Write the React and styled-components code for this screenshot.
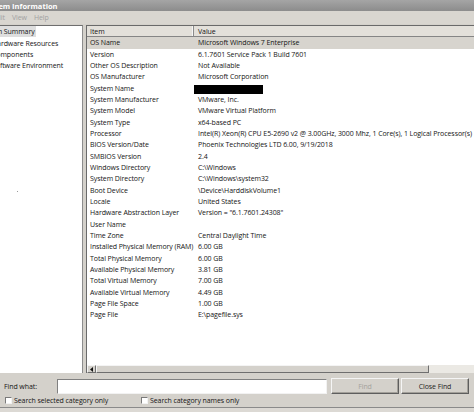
import React from "react";
import styled, { createGlobalStyle } from "styled-components";

const GlobalStyle = createGlobalStyle`
  html, body {
    margin: 0;
    padding: 0;
    background: #d4d1cb;
  }
  body {
    font-family: "Open Sans", "Noto Sans", "Liberation Sans", sans-serif;
  }
`;

const rows = [
  ["OS Name", "Microsoft Windows 7 Enterprise"],
  ["Version", "6.1.7601 Service Pack 1 Build 7601"],
  ["Other OS Description", "Not Available"],
  ["OS Manufacturer", "Microsoft Corporation"],
  ["System Name", null],
  ["System Manufacturer", "VMware, Inc."],
  ["System Model", "VMware Virtual Platform"],
  ["System Type", "x64-based PC"],
  ["Processor", "Intel(R) Xeon(R) CPU E5-2690 v2 @ 3.00GHz, 3000 Mhz, 1 Core(s), 1 Logical Processor(s)"],
  ["BIOS Version/Date", "Phoenix Technologies LTD 6.00, 9/19/2018"],
  ["SMBIOS Version", "2.4"],
  ["Windows Directory", "C:\\Windows"],
  ["System Directory", "C:\\Windows\\system32"],
  ["Boot Device", "\\Device\\HarddiskVolume1"],
  ["Locale", "United States"],
  ["Hardware Abstraction Layer", 'Version = "6.1.7601.24308"'],
  ["User Name", ""],
  ["Time Zone", "Central Daylight Time"],
  ["Installed Physical Memory (RAM)", "6.00 GB"],
  ["Total Physical Memory", "6.00 GB"],
  ["Available Physical Memory", "3.81 GB"],
  ["Total Virtual Memory", "7.00 GB"],
  ["Available Virtual Memory", "4.49 GB"],
  ["Page File Space", "1.00 GB"],
  ["Page File", "E:\\pagefile.sys"],
];

const treeItems = [
  { label: "System Summary", level: 0, selected: true },
  { label: "Hardware Resources", level: 1 },
  { label: "Components", level: 1 },
  { label: "Software Environment", level: 1 },
];

const Viewport = styled.div`
  width: 474px;
  height: 412px;
  overflow: hidden;
`;

// the window is wider than the shot: its left edge is cut off
const Window = styled.div`
  margin-left: -30px;
  width: 504px;
  height: 412px;
  display: flex;
  flex-direction: column;
  font-size: 7px;
  letter-spacing: -0.08px;
  color: #141414;
  background: #d4d1cb;
`;

const TitleBar = styled.div`
  flex: none;
  height: 11px;
  display: flex;
  align-items: center;
  padding-left: 13px;
  background: linear-gradient(#a5a5a5, #8c8c8c);
  color: #fff;
  font-weight: 700;
  font-size: 7.5px;
  letter-spacing: 0;
`;

const MenuBar = styled.div`
  flex: none;
  height: 13px;
  display: flex;
  align-items: center;
  gap: 7px;
  padding-left: 5px;
  background: #d9d6d0;
  color: #a2a2a2;
`;

const Main = styled.div`
  flex: 1;
  min-height: 0;
  display: flex;
  gap: 3px;
  padding-top: 1px;
`;

const TreePanel = styled.div`
  flex: none;
  width: 113px;
  box-sizing: border-box;
  background: #fff;
  border: 1px solid #8d8d8d;
  border-top-color: #6e6e6e;
  border-bottom: none;
  padding-top: 0.33px;
  position: relative;
`;

const TreeRow = styled.div`
  height: 11.33px;
  display: flex;
  align-items: center;
  padding-left: ${(p) => (p.$level ? 20 : 7)}px;
  white-space: nowrap;
`;

const TreeLabel = styled.span`
  padding: 1px 1px;
  background: ${(p) => (p.$selected ? "#dedede" : "transparent")};
`;

const StrayDot = styled.span`
  position: absolute;
  left: 46px;
  top: 165px;
  width: 1px;
  height: 1px;
  background: #9a9a9a;
`;

const ListPanel = styled.div`
  flex: 1;
  min-width: 0;
  display: flex;
  flex-direction: column;
  background: #fff;
  border-top: 1px solid #6a6a6a;
  border-left: 1px solid #6a6a6a;
  overflow: hidden;
`;

const HeaderRow = styled.div`
  flex: none;
  height: 11.33px;
  box-sizing: border-box;
  display: grid;
  grid-template-columns: 107px 1fr;
  background: #e3e0da;
  border-bottom: 1px solid #858585;
`;

const HeaderCell = styled.div`
  display: flex;
  align-items: center;
  padding-left: ${(p) => (p.$first ? 3 : 4)}px;
  border-right: ${(p) => (p.$first ? "1px solid #8c8c8c" : "none")};
  box-shadow: ${(p) => (p.$first ? "inset -1px 0 0 #f6f6f6" : "none")};
`;

const Body = styled.div`
  flex: 1;
  min-height: 0;
`;

const Row = styled.div`
  height: 11.33px;
  display: grid;
  grid-template-columns: 107px 1fr;
  background: ${(p) => (p.$selected ? "#d7d4ce" : "transparent")};
  white-space: nowrap;
`;

const Cell = styled.div`
  display: flex;
  align-items: center;
  padding-left: ${(p) => (p.$value ? 4 : 3)}px;
  overflow: hidden;
`;

const Redacted = styled.span`
  display: inline-block;
  width: 72px;
  height: 10px;
  margin-left: -7px;
  background: #000;
  position: relative;
  top: 2px;
`;

const HScroll = styled.div`
  flex: none;
  height: 8px;
  display: flex;
  background: #ebe9e4;
`;

const ScrollButton = styled.div`
  flex: none;
  width: 9px;
  box-sizing: border-box;
  display: flex;
  align-items: center;
  justify-content: center;
  background: #d4d1cb;
  border: 1px solid;
  border-color: #f4f4f4 #6f6f6f #6f6f6f #f4f4f4;
`;

const Thumb = styled.div`
  flex: none;
  width: 333px;
  box-sizing: border-box;
  background: #d4d1cb;
  border: 1px solid;
  border-color: #f4f4f4 #6f6f6f #6f6f6f #f4f4f4;
`;

const FindBar = styled.div`
  flex: none;
  height: 34px;
  box-sizing: border-box;
  padding: 5px 5px 0 34px;
  display: flex;
  flex-direction: column;
  gap: 2px;
`;

const FindRow = styled.div`
  height: 16px;
  display: flex;
  align-items: center;
`;

const FindLabel = styled.label`
  width: 53px;
  flex: none;
`;

const FindInput = styled.div`
  width: 270px;
  height: 15px;
  box-sizing: border-box;
  flex: none;
  background: #fff;
  border: 1px solid;
  border-color: #808080 #f2f2f2 #f2f2f2 #808080;
  margin-right: 4px;
`;

const Button = styled.div`
  width: 68px;
  height: 16px;
  box-sizing: border-box;
  flex: none;
  display: flex;
  align-items: center;
  justify-content: center;
  margin-right: 2px;
  background: #d4d1cb;
  border: 1px solid;
  border-color: #f5f5f5 #5e5e5e #5e5e5e #f5f5f5;
  box-shadow: inset -1px -1px 0 #a3a09a;
  color: ${(p) => (p.$disabled ? "#a4a29d" : "#1e1e1e")};
`;

const CheckRow = styled.div`
  height: 9px;
  display: grid;
  grid-template-columns: 136px auto;
  padding-left: 1px;
`;

const CheckItem = styled.div`
  display: flex;
  align-items: center;
  gap: 2px;
`;

const CheckBox = styled.span`
  width: 7px;
  height: 7px;
  box-sizing: border-box;
  background: #fff;
  border: 1px solid;
  border-color: #7a7a7a #f2f2f2 #f2f2f2 #7a7a7a;
`;

const StatusBar = styled.div`
  flex: none;
  height: 5px;
  box-sizing: border-box;
  background: #dcd9d4;
  border-top: 1px solid #8a8a8a;
`;

export default function App() {
  return (
    <Viewport>
      <GlobalStyle />
      <Window>
        <TitleBar>System Information</TitleBar>
        <MenuBar>
          <span>File</span>
          <span>Edit</span>
          <span>View</span>
          <span>Help</span>
        </MenuBar>
        <Main>
          <TreePanel>
            {treeItems.map((t) => (
              <TreeRow key={t.label} $level={t.level}>
                <TreeLabel $selected={t.selected}>{t.label}</TreeLabel>
              </TreeRow>
            ))}
            <StrayDot />
          </TreePanel>
          <ListPanel>
            <HeaderRow>
              <HeaderCell $first>Item</HeaderCell>
              <HeaderCell>Value</HeaderCell>
            </HeaderRow>
            <Body>
              {rows.map(([item, value], i) => (
                <Row key={item} $selected={i === 0}>
                  <Cell>{item}</Cell>
                  <Cell $value>{value === null ? <Redacted /> : value}</Cell>
                </Row>
              ))}
            </Body>
            <HScroll>
              <ScrollButton>
                <svg width="3" height="5" viewBox="0 0 3 5">
                  <path d="M3 0 L0 2.5 L3 5 Z" fill="#111" />
                </svg>
              </ScrollButton>
              <Thumb />
            </HScroll>
          </ListPanel>
        </Main>
        <FindBar>
          <FindRow>
            <FindLabel>Find what:</FindLabel>
            <FindInput />
            <Button $disabled>Find</Button>
            <Button>Close Find</Button>
          </FindRow>
          <CheckRow>
            <CheckItem>
              <CheckBox />
              <span>Search selected category only</span>
            </CheckItem>
            <CheckItem>
              <CheckBox />
              <span>Search category names only</span>
            </CheckItem>
          </CheckRow>
        </FindBar>
        <StatusBar />
      </Window>
    </Viewport>
  );
}
